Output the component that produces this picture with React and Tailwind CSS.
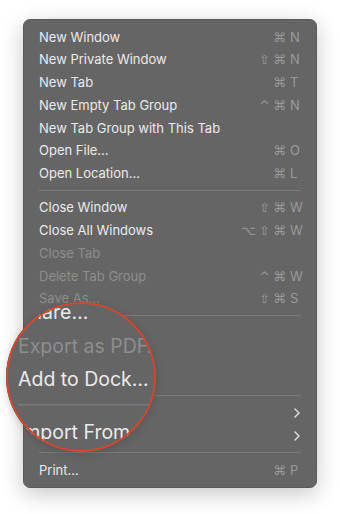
import React from "react";

const items = [
  { label: "New Window", mods: ["⌘"], key: "N" },
  { label: "New Private Window", mods: ["⇧", "⌘"], key: "N" },
  { label: "New Tab", mods: ["⌘"], key: "T" },
  { label: "New Empty Tab Group", mods: ["^", "⌘"], key: "N" },
  { label: "New Tab Group with This Tab" },
  { label: "Open File…", mods: ["⌘"], key: "O" },
  { label: "Open Location…", mods: ["⌘"], key: "L" },
  { sep: true },
  { label: "Close Window", mods: ["⇧", "⌘"], key: "W" },
  { label: "Close All Windows", mods: ["⌥", "⇧", "⌘"], key: "W" },
  { label: "Close Tab", disabled: true },
  { label: "Delete Tab Group", disabled: true, mods: ["^", "⌘"], key: "W" },
  { label: "Save As…", disabled: true, mods: ["⇧", "⌘"], key: "S" },
  { sep: true },
  { label: "Share…" },
  { label: "Export as PDF…", disabled: true },
  { label: "Add to Dock…" },
  { sep: true },
  { label: "Import From", sub: true },
  { label: "Export", sub: true },
  { sep: true },
  { label: "Print…", mods: ["⌘"], key: "P" },
];

function Chevron() {
  return (
    <svg width="6" height="10" viewBox="0 0 6 10" className="mr-[2px]">
      <path d="M1 1l4 4-4 4" fill="none" stroke="#e2e2e2" strokeWidth="1.4" strokeLinecap="round" strokeLinejoin="round" />
    </svg>
  );
}

function Menu() {
  return (
    <div
      className="ml-[23px] w-[294px] rounded-[7px] border border-[#5a5a5a] bg-[#656565] py-[5.5px] shadow-[0_6px_22px_rgba(0,0,0,0.22)]"
      style={{ fontFamily: "Inter, 'DejaVu Sans', sans-serif" }}
    >
      {items.map((it, i) =>
        it.sep ? (
          <div key={i} className="flex h-[11.6px] items-center px-[15px]">
            <div className="h-px w-full bg-[#7a7a7a]" />
          </div>
        ) : (
          <div
            key={i}
            className={`flex h-[22.75px] items-center justify-between pl-[15px] pr-[14px] pt-[1px] text-[13px] ${
              it.disabled ? "text-[#8e8e8e]" : "text-[#ebebeb]"
            }`}
          >
            <span>{it.label}</span>
            {it.key && (
              <span className="flex items-center text-[13px] text-[#9a9a9a]">
                <span className="flex gap-[3px]" style={{ fontFamily: "'DejaVu Sans', sans-serif" }}>
                  {it.mods.map((m, j) => (
                    <span key={j} className="text-[13px]">{m}</span>
                  ))}
                </span>
                <span className="ml-[4px] w-[12px] text-left">{it.key}</span>
              </span>
            )}
            {it.sub && <Chevron />}
          </div>
        )
      )}
    </div>
  );
}

export default function App() {
  return (
    <div className="relative min-h-[514px] overflow-hidden bg-white pt-[19px]">
      <Menu />

      {/* magnifier lens */}
      <div className="absolute left-[6px] top-[302px] h-[150px] w-[150px] overflow-hidden rounded-full bg-[#656565] shadow-[0_2px_8px_rgba(0,0,0,0.15)]">
        <div
          className="absolute left-[-6px] top-[-302px] h-[514px] w-[340px] pt-[19px]"
          style={{ transform: "scale(1.5)", transformOrigin: "81px 377px" }}
        >
          <Menu />
        </div>
        <div className="absolute inset-0 rounded-full border-2 border-[#dc4429]" />
      </div>
    </div>
  );
}
